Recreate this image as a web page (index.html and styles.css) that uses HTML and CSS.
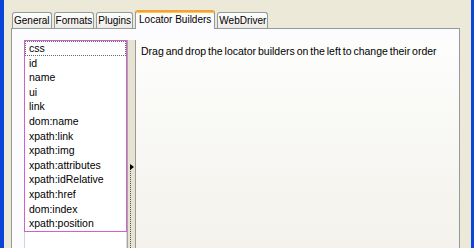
FILE: index.html
```html
<!DOCTYPE html>
<html lang="en">
<head>
    <meta charset="UTF-8">
    <title>Options - Locator Builders</title>
    <link rel="stylesheet" href="styles.css">
</head>
<body>
<div class="window">
    <div class="tabs">
        <div class="tab">General</div>
        <div class="tab">Formats</div>
        <div class="tab">Plugins</div>
        <div class="tab selected">Locator Builders</div>
        <div class="tab">WebDriver</div>
    </div>

    <div class="panel">
        <div class="builder-list">
            <div class="items">
                <div class="item focused">css</div>
                <div class="item">id</div>
                <div class="item">name</div>
                <div class="item">ui</div>
                <div class="item">link</div>
                <div class="item">dom:name</div>
                <div class="item">xpath:link</div>
                <div class="item">xpath:img</div>
                <div class="item">xpath:attributes</div>
                <div class="item">xpath:idRelative</div>
                <div class="item">xpath:href</div>
                <div class="item">dom:index</div>
                <div class="item">xpath:position</div>
            </div>
        </div>

        <div class="splitter">
            <div class="grip"></div>
        </div>

        <div class="help-pane">
            Drag and drop the locator builders on the left to change their order
        </div>
    </div>
</div>
</body>
</html>
```

FILE: styles.css
```css
html, body {
    margin: 0;
    height: 100%;
}

body {
    background-color: #0a44d8;
    padding: 0 3px 0 4px;
    font-family: 'Liberation Sans', Arial, sans-serif;
    font-size: 10.5px;
    color: #000;
    overflow: hidden;
}

.window {
    background-color: #ece9d8;
    height: 100%;
    display: flex;
    flex-direction: column;
    padding: 0 11px 0 7px;
}

.tabs {
    display: flex;
    align-items: flex-end;
    padding-top: 10px;
    padding-left: 1px;
    height: 18px;
    gap: 2px;
    position: relative;
    z-index: 1;
    font-size: 10px;
}

.tab {
    height: 15px;
    line-height: 15px;
    padding: 0 1px;
    border: 1px solid #919b9c;
    border-bottom: none;
    border-radius: 3px 3px 0 0;
    background: linear-gradient(#fefefe, #ecebe6);
    white-space: nowrap;
}

.tab.selected {
    height: 17px;
    line-height: 16px;
    padding: 0 3px;
    margin: 0 0 -1px 0;
    background: #fcfcfe;
    border-top: 2px solid #f1a33a;
    box-shadow: inset 0 1px 0 #ffc83c;
}

.panel {
    flex: 1;
    display: flex;
    border: 1px solid #919b9c;
    border-bottom: none;
    background-color: #fcfcfe;
    padding: 11px 0 0 12px;
}

.builder-list {
    width: 101px;
    border: 1px solid #cfd6df;
    border-bottom: none;
    background-color: #fff;
}

.items {
    margin: -1px -1px 0;
    border: 1px solid #d05fd2;
}

.item {
    height: 14.6px;
    line-height: 14.6px;
    padding-left: 4px;
    white-space: nowrap;
    box-sizing: border-box;
}

.item.focused {
    outline: 1px dotted #6a6a6a;
    outline-offset: -1px;
}

.splitter {
    width: 7px;
    border-left: 1px solid #a7a6a0;
    border-right: 1px solid #9b9a92;
    background-color: #e6e3d3;
    position: relative;
}

.grip {
    position: absolute;
    left: 2px;
    top: 127px;
    bottom: 0;
    border-left: 1px dotted #55554f;
}

.grip::before {
    content: "";
    position: absolute;
    left: -1px;
    top: -3px;
    border-left: 4px solid #000;
    border-top: 3px solid transparent;
    border-bottom: 3px solid transparent;
}

.help-pane {
    flex: 1;
    padding: 4px 5px;
    background: linear-gradient(#fdfdfc, #f3f2ec);
    line-height: 14px;
    white-space: nowrap;
    word-spacing: -1px;
}
```
